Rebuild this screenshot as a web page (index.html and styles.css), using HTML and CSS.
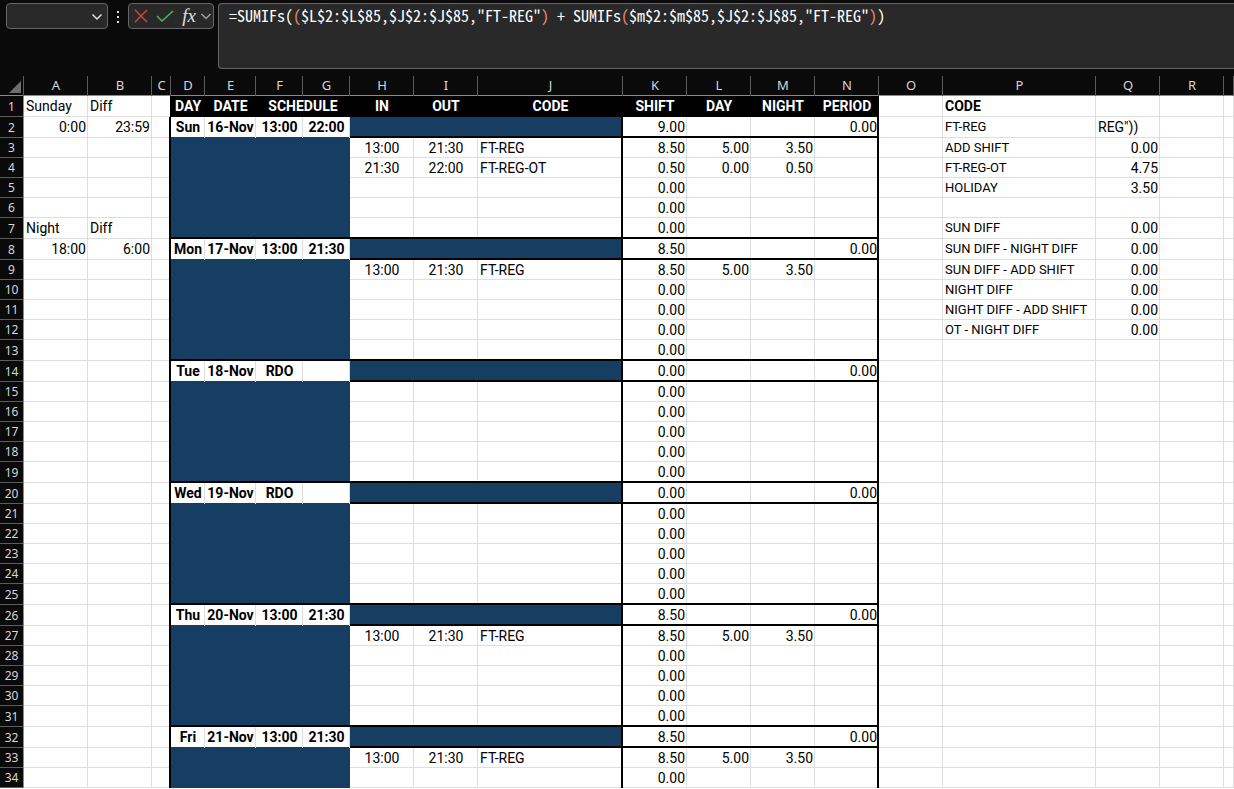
FILE: index.html
```html
<!DOCTYPE html>
<html lang="en">
<head>
<meta charset="utf-8">
<title>Timesheet</title>
<link rel="stylesheet" href="styles.css">
</head>
<body>
<header class="bar">
  <div class="name-box">
    <select class="name-select" aria-label="Name box"><option></option></select>
    <svg class="chevron" viewBox="0 0 12 12" aria-hidden="true"><path d="M1.5 4.5l4.500 4.500L10.500 4.500"/></svg>
  </div>
  <div class="dots" aria-hidden="true"><i></i><i></i><i></i></div>
  <div class="actions">
    <button class="action" aria-label="Cancel"><svg class="cancel" viewBox="0 0 14 14"><path d="M1 1l12 12M13 1L1 13"/></svg></button>
    <button class="action" aria-label="Enter"><svg class="enter" viewBox="0 0 18 12"><path d="M1 6l5 5L17 1"/></svg></button>
    <button class="action fx" aria-label="Insert function"><span class="fx-text">fx</span><svg class="chevron dim" viewBox="0 0 12 12"><path d="M1.500 4l4.500 4.500L10.500 4"/></svg></button>
  </div>
  <div class="formula" role="textbox" aria-label="Formula bar" contenteditable="true" spellcheck="false">=SUMIFs(<span class="paren">(</span>$L$2:$L$85,$J$2:$J$85,"FT-REG"<span class="paren">)</span> + SUMIFs<span class="paren">(</span>$m$2:$m$85,$J$2:$J$85,"FT-REG"<span class="paren">)</span>)</div>
</header>
<main class="sheet">
  <table class="grid" id="grid">
    <colgroup>
      <col class="w-row"><col class="w-std"><col class="w-std"><col class="w-c"><col class="w-d"><col class="w-e"><col class="w-f"><col class="w-f"><col class="w-std"><col class="w-std"><col class="w-j"><col class="w-std"><col class="w-std"><col class="w-std"><col class="w-std"><col class="w-std"><col class="w-p"><col class="w-std"><col class="w-std"><col>
    </colgroup>
    <thead><tr id="letters"><th class="corner" aria-label="Select all"><svg class="corner-mark" viewBox="0 0 12 12" aria-hidden="true"><path d="M12 0v12H0z"/></svg></th></tr></thead>
    <tbody id="rows"></tbody>
  </table>
</main>
<script src="sheet.js"></script>
</body>
</html>
```
FILE: styles.css
```css
* { box-sizing: border-box; }

body {
  display: flex;
  flex-direction: column;
  height: 100vh;
  margin: 0;
  overflow: hidden;
  background: #0a0a0a;
  font-family: Roboto, "Liberation Sans", sans-serif;
}

.bar {
  display: flex;
  align-items: flex-start;
  flex: none;
  height: 76px;
  padding: 3px 0 0 6px;
}

.name-box,
.actions,
.formula {
  border: 1px solid #666;
  border-radius: 4px;
  background: #292929;
}

.name-box {
  display: grid;
  align-items: center;
  justify-items: end;
  width: 102px;
  height: 26px;
}

.name-select {
  grid-area: 1 / 1;
  width: 100%;
  height: 24px;
  border: 0;
  background: none;
  color: #fff;
  appearance: none;
}

.name-box .chevron {
  grid-area: 1 / 1;
  margin-right: 4px;
  pointer-events: none;
}

.chevron {
  width: 12px;
  height: 12px;
  fill: none;
  stroke: #e0e0e0;
  stroke-width: 1.5;
}

.chevron.dim { stroke: #a0a0a0; }

.dots {
  display: grid;
  gap: 3px;
  width: 20px;
  padding-top: 8px;
  justify-items: center;
}

.dots i {
  width: 2px;
  height: 2px;
  background: #e0e0e0;
}

.actions {
  display: flex;
  align-items: center;
  justify-content: space-between;
  width: 86px;
  height: 26px;
  padding: 0 1px 0 5px;
}

.action {
  display: flex;
  align-items: center;
  height: 24px;
  padding: 0;
  border: 0;
  background: none;
}

.cancel {
  width: 14px;
  height: 14px;
  fill: none;
  stroke: #d9444b;
  stroke-width: 1.4;
}

.enter {
  width: 18px;
  height: 12px;
  fill: none;
  stroke: #55b36a;
  stroke-width: 1.4;
}

.fx { gap: 4px; }

.fx-text {
  color: #e0e0e0;
  font: italic 19px/22px "Liberation Serif", serif;
}

.formula {
  flex: 1;
  height: 66px;
  margin-left: 4px;
  padding: 0 10px;
  border-right: 0;
  border-radius: 4px 0 0 4px;
  outline: 0;
  color: #fff;
  font: 16px/22px "Noto Sans Mono CJK SC", "DejaVu Sans Mono", monospace;
  white-space: pre-wrap;
}

.paren { color: #f08a72; }

.sheet {
  flex: 1;
  min-height: 0;
  overflow: hidden;
  background: #fff;
}

.grid {
  width: 100%;
  min-width: 1234px;
  table-layout: fixed;
  border-spacing: 0;
  color: #000;
  font-size: 14px;
  line-height: 18px;
}

.w-row { width: 24px; }
.w-std { width: 64px; }
.w-c { width: 19px; }
.w-d { width: 34px; }
.w-e { width: 51px; }
.w-f { width: 47px; }
.w-j { width: 145px; }
.w-p { width: 153px; }

/* Cell lines are inset shadows, so heavy and light edges meet squarely. */
th, td {
  --side: -1px 0 #dedede;
  --base: 0 -1px #dedede;
  height: 20px;
  padding: 0 2px 1px;
  box-shadow: inset var(--side), inset var(--base);
  white-space: nowrap;
}

.tall > * { height: 21px; }
.tall > td { padding-bottom: 2px; }

thead th,
.num {
  --side: -1px 0 #5c5c5c;
  --base: 0 -1px #5c5c5c;
  padding: 0;
  background: #0a0a0a;
  color: #d6d6d6;
  font: 13px/18px "Noto Sans", sans-serif;
  text-align: center;
}

thead th {
  --base: 0 -1px #8a8a8a;
  padding-bottom: 2px;
}

.num {
  --side: -1px 0 #8a8a8a;
  padding-right: 1px;
  font-size: 12px;
}

.corner-mark {
  display: block;
  width: 12px;
  height: 12px;
  margin: 4px 3px 0 auto;
  fill: #6e6e6e;
}

.center { text-align: center; }
.right { text-align: right; }
.label { font-size: 13px; }
.bold { font-weight: 700; }

.title {
  --side: -1px 0 #000;
  --base: 0 -1px #000;
  background: #000;
  color: #fff;
  font-weight: 700;
  text-align: center;
}

.edge-dark { --side: -1px 0 #000; }

.fill {
  --side: -1px 0 #163d62;
  --base: 0 -1px #163d62;
  background: #163d62;
}

.above-fill { --base: 0 -1px #163d62; }
.edge { --side: -2px 0 #000; }

.rule {
  --base: 0 -2px #000;
  box-shadow: inset var(--base), inset var(--side);
}
```
FILE: sheet.js
```javascript
const letters = "ABCDEFGHIJKLMNOPQRS".split("");

const values = {
  A1: "Sunday", B1: "Diff", A2: "0:00", B2: "23:59",
  A7: "Night", B7: "Diff", A8: "18:00", B8: "6:00",
  D1: "DAY", E1: "DATE", F1: "SCHEDULE", H1: "IN", I1: "OUT", J1: "CODE",
  K1: "SHIFT", L1: "DAY", M1: "NIGHT", N1: "PERIOD",
  P1: "CODE", P2: "FT-REG", P3: "ADD SHIFT", P4: "FT-REG-OT", P5: "HOLIDAY",
  P7: "SUN DIFF", P8: "SUN DIFF - NIGHT DIFF", P9: "SUN DIFF - ADD SHIFT",
  P10: "NIGHT DIFF", P11: "NIGHT DIFF - ADD SHIFT", P12: "OT - NIGHT DIFF",
  Q2: "REG\"))", Q3: "0.00", Q4: "4.75", Q5: "3.50", Q7: "0.00", Q8: "0.00",
  Q9: "0.00", Q10: "0.00", Q11: "0.00", Q12: "0.00"
};

const days = [
  { day: ["Sun", "16-Nov", "13:00", "22:00", "9.00"],
    shifts: [["13:00", "21:30", "FT-REG", "8.50", "5.00", "3.50"],
             ["21:30", "22:00", "FT-REG-OT", "0.50", "0.00", "0.50"]] },
  { day: ["Mon", "17-Nov", "13:00", "21:30", "8.50"],
    shifts: [["13:00", "21:30", "FT-REG", "8.50", "5.00", "3.50"]] },
  { day: ["Tue", "18-Nov", "RDO", "", "0.00"], shifts: [] },
  { day: ["Wed", "19-Nov", "RDO", "", "0.00"], shifts: [] },
  { day: ["Thu", "20-Nov", "13:00", "21:30", "8.50"],
    shifts: [["13:00", "21:30", "FT-REG", "8.50", "5.00", "3.50"]] },
  { day: ["Fri", "21-Nov", "13:00", "21:30", "8.50"],
    shifts: [["13:00", "21:30", "FT-REG", "8.50", "5.00", "3.50"]] }
];

days.forEach(({ day, shifts }, d) => {
  const top = 2 + d * 6;
  ["D", "E", "F", "G", "K"].forEach((c, i) => { values[c + top] = day[i]; });
  values["N" + top] = "0.00";
  for (let i = 0; i < 5; i++) {
    const shift = shifts[i] || ["", "", "", "0.00", "", ""];
    ["H", "I", "J", "K", "L", "M"].forEach((c, n) => { values[c + (top + 1 + i)] = shift[n]; });
  }
});

function classesFor(col, row) {
  const list = [];
  const inLog = col >= "D" && col <= "N";
  const isDay = row > 1 && (row - 2) % 6 === 0;
  const isLast = row > 1 && (row - 2) % 6 === 5;
  const isTime = "AB".includes(col) && (row === 2 || row === 8);

  if (row === 1) {
    if (inLog) list.push("title");
    if (col === "C") list.push("edge-dark");
    if (col === "P") list.push("bold");
    return list;
  }
  if ((col >= "D" && col <= "G" && !isDay) || (col >= "H" && col <= "J" && isDay)) list.push("fill");
  if ("CJN".includes(col)) list.push("edge");
  if (inLog && isLast) list.push("rule");
  if (inLog && isDay) list.push(col <= "G" ? "above-fill" : "rule");
  if (col >= "D" && col <= "G") list.push("center", "bold");
  if (col === "H" || col === "I") list.push("center");
  if ((col >= "K" && col <= "N") || isTime || (col === "Q" && row !== 2)) list.push("right");
  if (col === "P") list.push("label");
  return list;
}

const head = document.getElementById("letters");
letters.forEach((c) => {
  const th = document.createElement("th");
  th.scope = "col";
  th.textContent = c === "S" ? "" : c;
  head.append(th);
});

const body = document.getElementById("rows");
for (let row = 1; row <= 34; row++) {
  const tr = document.createElement("tr");
  if (row === 1 || (row - 2) % 6 === 0 || (row - 2) % 6 === 5) tr.className = "tall";
  const num = document.createElement("th");
  num.scope = "row";
  num.className = "num";
  num.textContent = row;
  tr.append(num);
  letters.forEach((c) => {
    if (c === "G" && row === 1) return;
    const td = document.createElement("td");
    if (c === "F" && row === 1) td.colSpan = 2;
    td.className = classesFor(c, row).join(" ");
    td.textContent = values[c + row] || "";
    tr.append(td);
  });
  body.append(tr);
}
```
